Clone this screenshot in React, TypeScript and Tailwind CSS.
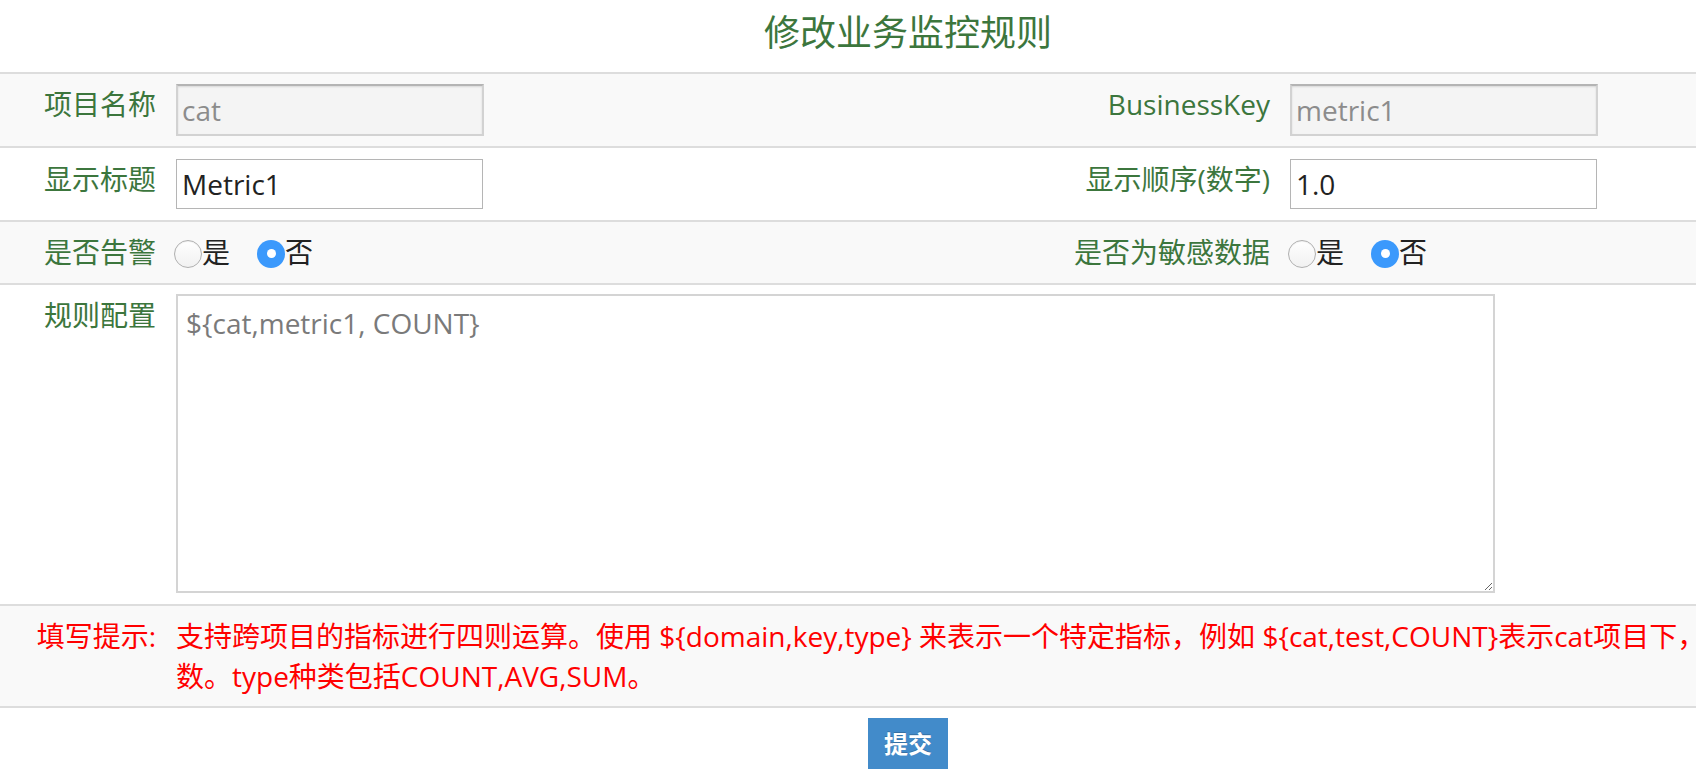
import React from "react";

const font = "font-['Open_Sans','Noto_Sans_CJK_SC',sans-serif]";

function Radio({ checked }: { checked?: boolean }) {
  return checked ? (
    <span className="flex h-[28px] w-[28px] shrink-0 items-center justify-center rounded-full bg-[#3b99fc]">
      <span className="block h-[9px] w-[9px] rounded-full bg-white" />
    </span>
  ) : (
    <span className="block h-[28px] w-[28px] shrink-0 rounded-full border border-[#b0b0b0] bg-gradient-to-b from-white to-[#f1f1f1] shadow-[inset_0_1px_1px_rgba(0,0,0,0.06)]" />
  );
}

function RadioGroup() {
  return (
    <div className="flex h-[40px] items-center text-[#222]">
      <span className="-ml-[2px] mt-[3px] block">
        <Radio />
      </span>
      <span className="leading-[40px]">是</span>
      <span className="ml-[27px] mt-[3px] block">
        <Radio checked />
      </span>
      <span className="leading-[40px]">否</span>
    </div>
  );
}

const label = "pr-[10px] text-right leading-[40px] text-[#3c763d] whitespace-nowrap";
const grid = "grid grid-cols-[166px_534px_580px_536px] border-t-2 border-[#dddddd]";

export default function App() {
  return (
    <div className="h-[780px] w-[1696px] overflow-hidden bg-white">
      <div className={`w-[1816px] ${font} text-[28px]`}>
        <div className="h-[72px] pt-[12px] text-center text-[36px] leading-[42px] text-[#3c763d]">
          修改业务监控规则
        </div>

        <div className={`${grid} bg-[#f9f9f9] py-[10px]`}>
          <div className={label}>项目名称</div>
          <div className="pl-[10px]">
            <input
              readOnly
              defaultValue="cat"
              className="h-[52px] w-[308px] border-2 border-[#d2d2d2] border-t-[#b4b4b4] bg-[#f4f4f4] px-[4px] text-[28px] text-[#8c8c8c] shadow-[inset_0_1px_2px_rgba(0,0,0,0.12)] outline-none"
            />
          </div>
          <div className={label}>BusinessKey</div>
          <div className="pl-[10px]">
            <input
              readOnly
              defaultValue="metric1"
              className="h-[52px] w-[308px] border-2 border-[#d2d2d2] border-t-[#b4b4b4] bg-[#f4f4f4] px-[4px] text-[28px] text-[#8c8c8c] shadow-[inset_0_1px_2px_rgba(0,0,0,0.12)] outline-none"
            />
          </div>
        </div>

        <div className={`${grid} bg-white py-[11px]`}>
          <div className={label}>显示标题</div>
          <div className="pl-[10px]">
            <input
              defaultValue="Metric1"
              className="h-[50px] w-[307px] border border-[#b5b5b5] bg-white px-[5px] text-[28px] text-[#222] outline-none"
            />
          </div>
          <div className={label}>显示顺序(数字)</div>
          <div className="pl-[10px]">
            <input
              defaultValue="1.0"
              className="h-[50px] w-[307px] border border-[#b5b5b5] bg-white px-[5px] text-[28px] text-[#222] outline-none"
            />
          </div>
        </div>

        <div className={`${grid} bg-[#f9f9f9] pt-[10px] pb-[11px]`}>
          <div className={label}>是否告警</div>
          <div className="pl-[10px]">
            <RadioGroup />
          </div>
          <div className={label}>是否为敏感数据</div>
          <div className="pl-[10px]">
            <RadioGroup />
          </div>
        </div>

        <div className={`${grid} bg-white pt-[9px] pb-[11px]`}>
          <div className={`${label} pt-[1px]`}>规则配置</div>
          <div className="col-span-3 pl-[10px]">
            <textarea
              defaultValue="${cat,metric1, COUNT}"
              className="block h-[299px] w-[1319px] resize border-2 border-[#d4d4d4] bg-white px-[8px] pt-[7px] text-[28px] leading-[40px] text-[#7a7a7a] outline-none"
            />
          </div>
        </div>

        <div className={`${grid} bg-[#f9f9f9] py-[10px] text-[#ff0000]`}>
          <div className="pr-[10px] text-right leading-[40px] whitespace-nowrap">填写提示:</div>
          <div className="col-span-3 pl-[10px] leading-[40px]">
            <div className="whitespace-nowrap">
              支持跨项目的指标进行四则运算。使用 {"${domain,key,type}"} 来表示一个特定指标，例如 {"${cat,test,COUNT}"}表示cat项目下，
            </div>
            <div className="whitespace-nowrap">数。type种类包括COUNT,AVG,SUM。</div>
          </div>
        </div>

        <div className="flex justify-center border-t-2 border-[#dddddd] bg-white pt-[10px]">
          <button className="flex h-[51px] w-[80px] items-center justify-center bg-[#428bca] text-[24px] font-bold text-white [text-shadow:0_-1px_0_rgba(0,0,0,0.2)]">
            提交
          </button>
        </div>
      </div>
    </div>
  );
}
